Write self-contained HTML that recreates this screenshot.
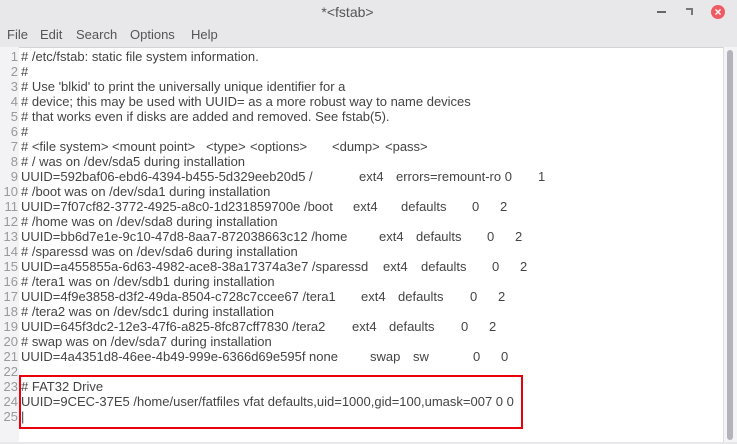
<!DOCTYPE html>
<html><head><meta charset="utf-8"><style>
*{margin:0;padding:0;box-sizing:border-box}
body{width:737px;height:444px;background:#e8e8eb;font-family:"Liberation Sans",sans-serif;position:relative;overflow:hidden}
.title{position:absolute;top:4px;left:0;width:695px;text-align:center;font-size:14px;color:#555}
.menu{position:absolute;top:27px;font-size:13px;color:#555}
.ed{position:absolute;left:0;top:47px;width:723px;height:395px;background:#fff;border-top:1px solid #d4d4d8}
.gut{position:absolute;left:0;top:47px;width:19px;height:395px;background:#f3f3f5}
.l{position:absolute;left:0;height:15px;font-size:13px;line-height:15px;color:#444;white-space:pre;width:723px}
.l b{font-weight:normal;position:absolute;right:705px;color:#999;text-align:right}
.l i{font-style:normal;position:absolute;left:21px}
.l span{position:absolute}
.sb{position:absolute;left:723px;top:47px;width:14px;height:395px;background:#f4f4f6;border-left:1px solid #ddd}
.th{position:absolute;left:727px;top:50px;width:6px;height:390px;background:#b4b3bb;border-radius:3px}
</style></head><body>
<div class="title">*&lt;fstab&gt;</div>
<div style="position:absolute;left:657px;top:11px;width:9px;height:2px;background:#666"></div>
<div style="position:absolute;left:686px;top:8px;width:7px;height:7px;border-top:2px solid #777;border-right:2px solid #777"></div>
<div style="position:absolute;left:711px;top:5px;width:14px;height:14px;border-radius:50%;background:#ef5a63;color:#fff;font-size:12px;line-height:14px;text-align:center;font-weight:bold">×</div>
<div class="menu" style="left:7px">File</div>
<div class="menu" style="left:40px">Edit</div>
<div class="menu" style="left:76px">Search</div>
<div class="menu" style="left:130px">Options</div>
<div class="menu" style="left:191px">Help</div>
<div class="ed"></div><div class="gut"></div>
<div class="sb"></div><div class="th"></div>

<div class="l" style="top:49px"><b>1</b><i># /etc/fstab: static file system information.</i></div>
<div class="l" style="top:64px"><b>2</b><i>#</i></div>
<div class="l" style="top:79px"><b>3</b><i># Use 'blkid' to print the universally unique identifier for a</i></div>
<div class="l" style="top:94px"><b>4</b><i># device; this may be used with UUID= as a more robust way to name devices</i></div>
<div class="l" style="top:109px"><b>5</b><i># that works even if disks are added and removed. See fstab(5).</i></div>
<div class="l" style="top:124px"><b>6</b><i>#</i></div>
<div class="l" style="top:139px"><b>7</b><i># &lt;file system&gt; &lt;mount point&gt;   &lt;type&gt;</i><span style="left:250px">&lt;options&gt;</span><span style="left:332px">&lt;dump&gt;</span><span style="left:385px">&lt;pass&gt;</span></div>
<div class="l" style="top:154px"><b>8</b><i># / was on /dev/sda5 during installation</i></div>
<div class="l" style="top:169px"><b>9</b><i>UUID=592baf06-ebd6-4394-b455-5d329eeb20d5 /</i><span style="left:359px">ext4</span><span style="left:396px">errors=remount-ro 0</span><span style="left:538px">1</span></div>
<div class="l" style="top:184px"><b>10</b><i># /boot was on /dev/sda1 during installation</i></div>
<div class="l" style="top:199px"><b>11</b><i>UUID=7f07cf82-3772-4925-a8c0-1d231859700e /boot</i><span style="left:353px">ext4</span><span style="left:401px">defaults</span><span style="left:472px">0</span><span style="left:500px">2</span></div>
<div class="l" style="top:214px"><b>12</b><i># /home was on /dev/sda8 during installation</i></div>
<div class="l" style="top:229px"><b>13</b><i>UUID=bb6d7e1e-9c10-47d8-8aa7-872038663c12 /home</i><span style="left:379px">ext4</span><span style="left:416px">defaults</span><span style="left:487px">0</span><span style="left:515px">2</span></div>
<div class="l" style="top:244px"><b>14</b><i># /sparessd was on /dev/sda6 during installation</i></div>
<div class="l" style="top:259px"><b>15</b><i>UUID=a455855a-6d63-4982-ace8-38a17374a3e7 /sparessd</i><span style="left:383px">ext4</span><span style="left:421px">defaults</span><span style="left:492px">0</span><span style="left:520px">2</span></div>
<div class="l" style="top:274px"><b>16</b><i># /tera1 was on /dev/sdb1 during installation</i></div>
<div class="l" style="top:289px"><b>17</b><i>UUID=4f9e3858-d3f2-49da-8504-c728c7ccee67 /tera1</i><span style="left:361px">ext4</span><span style="left:398px">defaults</span><span style="left:470px">0</span><span style="left:498px">2</span></div>
<div class="l" style="top:304px"><b>18</b><i># /tera2 was on /dev/sdc1 during installation</i></div>
<div class="l" style="top:319px"><b>19</b><i>UUID=645f3dc2-12e3-47f6-a825-8fc87cff7830 /tera2</i><span style="left:352px">ext4</span><span style="left:389px">defaults</span><span style="left:461px">0</span><span style="left:489px">2</span></div>
<div class="l" style="top:334px"><b>20</b><i># swap was on /dev/sda7 during installation</i></div>
<div class="l" style="top:349px"><b>21</b><i>UUID=4a4351d8-46ee-4b49-999e-6366d69e595f none</i><span style="left:370px">swap</span><span style="left:413px">sw</span><span style="left:473px">0</span><span style="left:501px">0</span></div>
<div class="l" style="top:364px"><b>22</b></div>
<div class="l" style="top:379px"><b>23</b><i># FAT32 Drive</i></div>
<div class="l" style="top:394px"><b>24</b><i>UUID=9CEC-37E5 /home/user/fatfiles vfat defaults,uid=1000,gid=100,umask=007 0 0</i></div>
<div class="l" style="top:409px"><b>25</b><i>|</i></div>
<div style="position:absolute;left:19px;top:375px;width:504px;height:54px;border:2px solid #e8000b"></div>
</body></html>
